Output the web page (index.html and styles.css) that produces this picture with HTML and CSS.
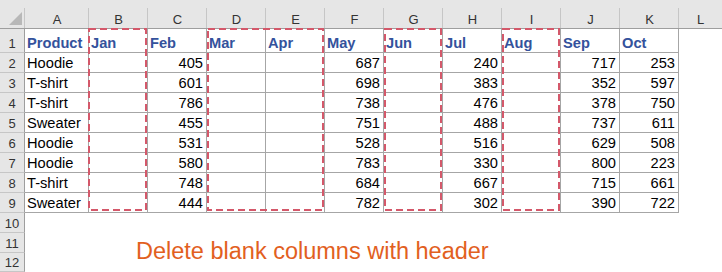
FILE: index.html
```html
<!DOCTYPE html>
<html>
<head>
<meta charset="utf-8">
<link rel="stylesheet" href="styles.css">
</head>
<body>
<div class="sheet">
  <div class="corner"><svg class="tri" width="24" height="28" viewBox="0 0 24 28"><polygon points="22,12 22,25 9,25" fill="#b8b8b8"/></svg></div>
  <div class="col">A</div><div class="col">B</div><div class="col">C</div><div class="col">D</div><div class="col">E</div><div class="col">F</div><div class="col">G</div><div class="col">H</div><div class="col">I</div><div class="col">J</div><div class="col">K</div><div class="col last">L</div>

  <div class="rh">1</div>
  <div class="c hd">Product</div><div class="c hd">Jan</div><div class="c hd">Feb</div><div class="c hd">Mar</div><div class="c hd">Apr</div><div class="c hd">May</div><div class="c hd">Jun</div><div class="c hd">Jul</div><div class="c hd">Aug</div><div class="c hd">Sep</div><div class="c hd">Oct</div><div class="e"></div>

  <div class="rh">2</div>
  <div class="c">Hoodie</div><div class="c"></div><div class="c n">405</div><div class="c"></div><div class="c"></div><div class="c n">687</div><div class="c"></div><div class="c n">240</div><div class="c"></div><div class="c n">717</div><div class="c n">253</div><div class="e"></div>

  <div class="rh">3</div>
  <div class="c">T-shirt</div><div class="c"></div><div class="c n">601</div><div class="c"></div><div class="c"></div><div class="c n">698</div><div class="c"></div><div class="c n">383</div><div class="c"></div><div class="c n">352</div><div class="c n">597</div><div class="e"></div>

  <div class="rh">4</div>
  <div class="c">T-shirt</div><div class="c"></div><div class="c n">786</div><div class="c"></div><div class="c"></div><div class="c n">738</div><div class="c"></div><div class="c n">476</div><div class="c"></div><div class="c n">378</div><div class="c n">750</div><div class="e"></div>

  <div class="rh">5</div>
  <div class="c">Sweater</div><div class="c"></div><div class="c n">455</div><div class="c"></div><div class="c"></div><div class="c n">751</div><div class="c"></div><div class="c n">488</div><div class="c"></div><div class="c n">737</div><div class="c n">611</div><div class="e"></div>

  <div class="rh">6</div>
  <div class="c">Hoodie</div><div class="c"></div><div class="c n">531</div><div class="c"></div><div class="c"></div><div class="c n">528</div><div class="c"></div><div class="c n">516</div><div class="c"></div><div class="c n">629</div><div class="c n">508</div><div class="e"></div>

  <div class="rh">7</div>
  <div class="c">Hoodie</div><div class="c"></div><div class="c n">580</div><div class="c"></div><div class="c"></div><div class="c n">783</div><div class="c"></div><div class="c n">330</div><div class="c"></div><div class="c n">800</div><div class="c n">223</div><div class="e"></div>

  <div class="rh">8</div>
  <div class="c">T-shirt</div><div class="c"></div><div class="c n">748</div><div class="c"></div><div class="c"></div><div class="c n">684</div><div class="c"></div><div class="c n">667</div><div class="c"></div><div class="c n">715</div><div class="c n">661</div><div class="e"></div>

  <div class="rh">9</div>
  <div class="c">Sweater</div><div class="c"></div><div class="c n">444</div><div class="c"></div><div class="c"></div><div class="c n">782</div><div class="c"></div><div class="c n">302</div><div class="c"></div><div class="c n">390</div><div class="c n">722</div><div class="e"></div>

  <div class="rh">10</div>
  <div class="blank"></div>
  <div class="rh">11</div>
  <div class="caption">Delete blank columns with header</div>
  <div class="rh">12</div>

  <svg class="marks" width="722" height="272" viewBox="0 0 722 272">
    <g fill="none" stroke="#d4586a" stroke-width="2" stroke-dasharray="7 4">
      <rect x="89" y="29" width="57" height="181"/>
      <rect x="208" y="29" width="115" height="181"/>
      <rect x="385" y="29" width="56" height="181"/>
      <rect x="503" y="29" width="56" height="181"/>
    </g>
  </svg>
</div>
</body>
</html>
```

FILE: styles.css
```css
html, body {
  margin: 0;
  padding: 0;
  background: #ffffff;
  overflow: hidden;
}

.sheet {
  position: relative;
  width: 722px;
  height: 272px;
  display: grid;
  grid-template-columns: 25px 64px repeat(10, 59px) 1fr;
  grid-template-rows: 29px 24px repeat(10, 20px) 19px;
  font-family: "Liberation Sans", Arial, sans-serif;
}

.sheet > div {
  box-sizing: border-box;
  min-width: 0;
}

.corner {
  background: linear-gradient(#c6c6c6, #c6c6c6) right bottom / 1px 20px no-repeat #e6e6e6;
  border-bottom: 1px solid #9e9e9e;
}

.tri {
  display: block;
}

.col {
  background: linear-gradient(#c6c6c6, #c6c6c6) right bottom / 1px 20px no-repeat #e6e6e6;
  border-bottom: 1px solid #9e9e9e;
  font-size: 13px;
  line-height: 15px;
  color: #333333;
  display: flex;
  align-items: flex-end;
  justify-content: center;
  padding-bottom: 1px;
}

.col.last {
  background: #e6e6e6;
}

.rh {
  grid-column: 1;
  background: #e6e6e6;
  border-right: 1px solid #9e9e9e;
  border-bottom: 1px solid #c6c6c6;
  font-size: 13px;
  line-height: 15px;
  color: #333333;
  display: flex;
  align-items: flex-end;
  justify-content: center;
  padding-bottom: 1px;
}

.c {
  border-right: 1px solid #a6a6a6;
  border-bottom: 1px solid #a6a6a6;
  font-size: 14.667px;
  line-height: 16px;
  color: #000000;
  display: flex;
  align-items: flex-end;
  padding: 0 3px 1px 2px;
  white-space: nowrap;
}

.n {
  justify-content: flex-end;
}

.hd {
  font-weight: bold;
  color: #34529c;
}

.e {
  background: #ffffff;
}

.blank {
  grid-column: 2 / -1;
}

.caption {
  grid-column: 2 / -1;
  grid-row: span 2;
  align-self: start;
  padding: 5px 0 0 111px;
  font-size: 23.5px;
  line-height: 27px;
  color: #e2601e;
  white-space: nowrap;
}

.marks {
  position: absolute;
  left: 0;
  top: 0;
  pointer-events: none;
}
```
